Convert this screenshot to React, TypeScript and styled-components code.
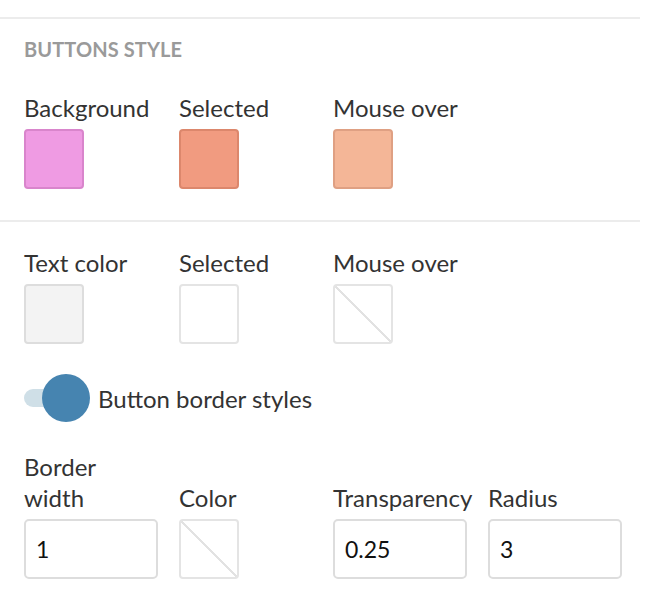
import styled, { createGlobalStyle } from "styled-components";

const GlobalStyle = createGlobalStyle`
  html, body {
    margin: 0;
    padding: 0;
    background: #fff;
  }
  body {
    font-family: Lato, "Open Sans", Arial, sans-serif;
    color: #333;
  }
`;

const Panel = styled.div`
  width: 648px;
  padding-top: 17px;
`;

const Divider = styled.div`
  height: 2px;
  background: #ececec;
  margin-right: 8px;
`;

const Section = styled.div`
  padding: 0 24px;
`;

const Heading = styled.div`
  font-size: 20px;
  font-weight: 700;
  line-height: 24px;
  color: #9a9a9a;
  letter-spacing: 0.1px;
  margin: 18px 0 31px;
`;

const Row = styled.div<{ $top?: number; $bottom?: number }>`
  display: grid;
  grid-template-columns: 155px 154px 155px 134px;
  align-items: end;
  margin-top: ${(p) => p.$top ?? 0}px;
  margin-bottom: ${(p) => p.$bottom ?? 0}px;
`;

const Field = styled.div`
  display: flex;
  flex-direction: column;
  gap: 6px;
`;

const Label = styled.div`
  font-size: 24px;
  line-height: 31px;
  color: #333;
  white-space: nowrap;
`;

const Swatch = styled.div<{ $fill: string; $edge: string; $empty?: boolean }>`
  box-sizing: border-box;
  width: 60px;
  height: 60px;
  border-radius: 4px;
  border: 2px solid ${(p) => p.$edge};
  background: ${(p) =>
    p.$empty
      ? `linear-gradient(to top right, transparent calc(50% - 1px), #e2e2e2 calc(50% - 1px), #e2e2e2 calc(50% + 1px), transparent calc(50% + 1px)), ${p.$fill}`
      : p.$fill};
`;

const Input = styled.input`
  box-sizing: border-box;
  width: 134px;
  height: 60px;
  border: 2px solid #dddddd;
  border-radius: 5px;
  padding: 0 10px;
  font-family: Lato, "Open Sans", Arial, sans-serif;
  font-size: 23px;
  color: #111;
  outline: none;
`;

const ToggleRow = styled.label`
  display: flex;
  align-items: center;
  gap: 8px;
  margin: 30px 0 29px;
`;

const Switch = styled.div`
  position: relative;
  width: 66px;
  height: 48px;
  display: flex;
  align-items: center;
`;

const Track = styled.div`
  width: 46px;
  height: 18px;
  border-radius: 9px;
  background: #cfdfe7;
`;

const Knob = styled.div`
  position: absolute;
  left: 18px;
  top: 0;
  width: 48px;
  height: 48px;
  border-radius: 50%;
  background: #4684b0;
`;

export default function App() {
  return (
    <>
      <GlobalStyle />
      <Panel>
        <Divider />
        <Section>
          <Heading>BUTTONS STYLE</Heading>
          <Row $bottom={31}>
            <Field>
              <Label>Background</Label>
              <Swatch $fill="#ef9be3" $edge="#d985cc" />
            </Field>
            <Field>
              <Label>Selected</Label>
              <Swatch $fill="#f19b80" $edge="#dc876c" />
            </Field>
            <Field>
              <Label>Mouse over</Label>
              <Swatch $fill="#f4b697" $edge="#dfa083" />
            </Field>
          </Row>
        </Section>
        <Divider />
        <Section>
          <Row $top={25}>
            <Field>
              <Label>Text color</Label>
              <Swatch $fill="#f3f3f3" $edge="#dddddd" />
            </Field>
            <Field>
              <Label>Selected</Label>
              <Swatch $fill="#ffffff" $edge="#e4e4e4" />
            </Field>
            <Field>
              <Label>Mouse over</Label>
              <Swatch $fill="#ffffff" $edge="#e4e4e4" $empty />
            </Field>
          </Row>
          <ToggleRow>
            <Switch>
              <Track />
              <Knob />
            </Switch>
            <Label>Button border styles</Label>
          </ToggleRow>
          <Row>
            <Field>
              <Label>
                Border
                <br />
                width
              </Label>
              <Input defaultValue="1" />
            </Field>
            <Field>
              <Label>Color</Label>
              <Swatch $fill="#ffffff" $edge="#e4e4e4" $empty />
            </Field>
            <Field>
              <Label>Transparency</Label>
              <Input defaultValue="0.25" />
            </Field>
            <Field>
              <Label>Radius</Label>
              <Input defaultValue="3" />
            </Field>
          </Row>
        </Section>
      </Panel>
    </>
  );
}
